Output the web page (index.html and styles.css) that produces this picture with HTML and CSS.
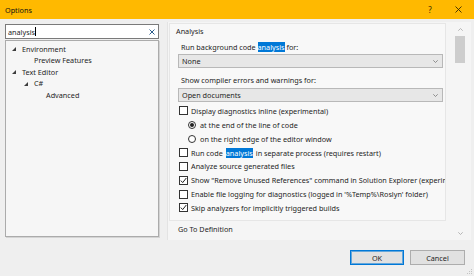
FILE: index.html
```html
<!DOCTYPE html>
<html lang="en">
<head>
  <meta charset="UTF-8">
  <title>Options</title>
  <link rel="stylesheet" href="styles.css">
</head>
<body>

  <div class="dialog">
    <!-- Title bar -->
    <div class="titlebar">
      <span class="title">Options</span>
      <span class="tb-btn tb-help">?</span>
      <span class="tb-btn">
        <svg width="7" height="7" viewBox="0 0 7 7"><path d="M0.5 0.5L6.5 6.5M6.5 0.5L0.5 6.5" stroke="#3a2a00" stroke-width="0.9" fill="none"/></svg>
      </span>
    </div>

    <div class="main">
      <!-- Left: search + tree -->
      <div class="nav">
        <div class="search">
          <span class="search-text">analysis<span class="caret"></span></span>
          <svg class="clear" width="6" height="6" viewBox="0 0 6 6"><path d="M0.5 0.5L5.5 5.5M5.5 0.5L0.5 5.5" stroke="#2b5d8c" stroke-width="1" fill="none"/></svg>
        </div>
        <ul class="tree">
          <li class="lvl0"><span class="exp"><svg width="4" height="4" viewBox="0 0 4 4"><path d="M4 0V4H0Z" fill="#3c3c3c"/></svg></span>Environment</li>
          <li class="lvl1"><span class="exp"></span>Preview Features</li>
          <li class="lvl0"><span class="exp"><svg width="4" height="4" viewBox="0 0 4 4"><path d="M4 0V4H0Z" fill="#3c3c3c"/></svg></span>Text Editor</li>
          <li class="lvl1"><span class="exp"><svg width="4" height="4" viewBox="0 0 4 4"><path d="M4 0V4H0Z" fill="#3c3c3c"/></svg></span>C#</li>
          <li class="lvl2"><span class="exp"></span>Advanced</li>
        </ul>
      </div>

      <!-- Right: option pages -->
      <div class="pane">
        <div class="content">
          <div class="section">
            <div class="section-head">Analysis</div>

            <div class="label">Run background code <mark>analysis</mark> for:</div>
            <div class="combo">
              <span class="combo-text">None</span>
              <svg width="5" height="3" viewBox="0 0 5 3"><path d="M0.3 0.3L2.5 2.5L4.7 0.3" stroke="#777" stroke-width="0.8" fill="none"/></svg>
            </div>

            <div class="label spaced">Show compiler errors and warnings for:</div>
            <div class="combo">
              <span class="combo-text">Open documents</span>
              <svg width="5" height="3" viewBox="0 0 5 3"><path d="M0.3 0.3L2.5 2.5L4.7 0.3" stroke="#777" stroke-width="0.8" fill="none"/></svg>
            </div>

            <div class="checks">
              <div class="row"><span class="box"></span>Display diagnostics inline (experimental)</div>
              <div class="row sub"><span class="radio on"></span>at the end of the line of code</div>
              <div class="row sub"><span class="radio"></span>on the right edge of the editor window</div>
              <div class="row"><span class="box"></span>Run code <mark>analysis</mark> in separate process (requires restart)</div>
              <div class="row"><span class="box"></span>Analyze source generated files</div>
              <div class="row"><span class="box checked"><svg width="7" height="7" viewBox="0 0 7 7"><path d="M0.8 3.6L2.7 5.6L6.3 1" stroke="#222" stroke-width="1" fill="none"/></svg></span>Show "Remove Unused References" command in Solution Explorer (experimental)</div>
              <div class="row"><span class="box"></span>Enable file logging for diagnostics (logged in '%Temp%\Roslyn' folder)</div>
              <div class="row"><span class="box checked"><svg width="7" height="7" viewBox="0 0 7 7"><path d="M0.8 3.6L2.7 5.6L6.3 1" stroke="#222" stroke-width="1" fill="none"/></svg></span>Skip analyzers for implicitly triggered builds</div>
            </div>
          </div>

          <div class="section-head collapsed">Go To Definition</div>
        </div>

        <!-- Scrollbar -->
        <div class="scrollbar">
          <div class="sb-arrow">
            <svg width="5" height="3" viewBox="0 0 5 3"><path d="M0.3 2.7L2.5 0.5L4.7 2.7" stroke="#a6a6a6" stroke-width="0.8" fill="none"/></svg>
          </div>
          <div class="sb-thumb"></div>
          <div class="sb-track"></div>
          <div class="sb-arrow">
            <svg width="5" height="3" viewBox="0 0 5 3"><path d="M0.3 0.3L2.5 2.5L4.7 0.3" stroke="#a6a6a6" stroke-width="0.8" fill="none"/></svg>
          </div>
        </div>
      </div>
    </div>

    <!-- Buttons -->
    <div class="footer">
      <button class="btn primary">OK</button>
      <button class="btn">Cancel</button>
      <svg class="grip" width="6" height="6" viewBox="0 0 6 6"><path d="M5 1h1v1H5zM3 3h1v1H3zM5 3h1v1H5zM1 5h1v1H1zM3 5h1v1H3zM5 5h1v1H5z" fill="#c4c4c4"/></svg>
    </div>
  </div>

</body>
</html>
```

FILE: styles.css
```css
* {
  box-sizing: border-box;
}

body {
  margin: 0;
  width: 474px;
  height: 276px;
  overflow: hidden;
  background: #efefef;
  font-family: 'Noto Sans', 'Liberation Sans', sans-serif;
  font-size: 7.25px;
  color: #1e1e1e;
}

.dialog {
  position: relative;
  height: 276px;
  display: flex;
  flex-direction: column;
}

/* Title bar */
.titlebar {
  height: 19px;
  background: #ffb900;
  display: flex;
  align-items: center;
  padding: 0 2px 0 5px;
  color: #111;
}

.title {
  flex: 1;
}

.tb-btn {
  width: 28px;
  height: 19px;
  display: flex;
  align-items: center;
  justify-content: center;
}

.tb-help {
  font-size: 8px;
  color: #3a2a00;
}

/* Main area */
.main {
  display: flex;
  gap: 8px;
  height: 221px;
  padding: 3px 3px 0 5px;
}

.nav {
  width: 154px;
  display: flex;
  flex-direction: column;
  gap: 1px;
  padding-top: 2px;
}

.search {
  height: 15px;
  background: #fff;
  border: 1px solid #7a7a7a;
  display: flex;
  align-items: center;
  padding: 0 3px 0 2px;
}

.search-text {
  flex: 1;
  display: flex;
  align-items: center;
}

.caret {
  display: inline-block;
  width: 1px;
  height: 9px;
  background: #000;
}

.tree {
  height: 197px;
  margin: 0;
  padding: 2px 0 0;
  list-style: none;
  background: #f6f6f6;
  border: 1px solid #ababab;
  box-shadow: 1px 1px 0 #d4d4d4;
}

.tree li {
  height: 11.5px;
  display: flex;
  align-items: center;
  padding-left: 4px;
}

.tree li.lvl1 {
  padding-left: 16px;
}

.tree li.lvl2 {
  padding-left: 28px;
}

.exp {
  width: 12px;
  display: flex;
  padding-left: 2px;
  padding-top: 1px;
}

/* Right pane */
.pane {
  flex: 1;
  display: flex;
  background: #f5f5f5;
  border-left: 1px solid #e3e3e3;
  padding-right: 4px;
  overflow: hidden;
}

.content {
  flex: 1;
  min-width: 0;
  padding: 1px 7px 0 1px;
}

.section {
  border: 1px solid #e6e6e6;
  background: #f8f8f8;
  padding: 0 2px 5px 6px;
  overflow: hidden;
  white-space: nowrap;
}

.section-head {
  height: 14px;
  line-height: 14px;
}

.section-head.collapsed {
  margin-top: 1px;
  padding-left: 9px;
}

.label {
  height: 12px;
  line-height: 12px;
  margin-top: 3px;
  padding-left: 5px;
}

.label.spaced {
  margin-top: 6px;
}

mark {
  background: #0078d7;
  color: #fff;
}

.combo {
  height: 14px;
  margin: 1px 0 0 2px;
  background: #e7e7e7;
  border: 1px solid #b8b8b8;
  display: flex;
  align-items: center;
  padding: 0 4px 0 3px;
}

.label.spaced + .combo {
  margin-top: 2px;
}

.combo-text {
  flex: 1;
}

.checks {
  margin-top: 2px;
}

.row {
  height: 13.86px;
  display: flex;
  align-items: center;
  gap: 3px;
  padding-left: 3px;
}

.row.sub {
  padding-left: 12px;
  gap: 4px;
}

.box {
  width: 9px;
  height: 9px;
  flex: none;
  background: #fff;
  border: 1px solid #333;
  display: flex;
  align-items: center;
  justify-content: center;
}

.radio {
  width: 8px;
  height: 8px;
  flex: none;
  border-radius: 50%;
  background: #fff;
  border: 1px solid #333;
  display: flex;
  align-items: center;
  justify-content: center;
}

.radio.on::after {
  content: '';
  width: 4px;
  height: 4px;
  border-radius: 50%;
  background: #222;
}

/* Scrollbar */
.scrollbar {
  width: 14px;
  display: flex;
  flex-direction: column;
}

.sb-arrow {
  height: 14px;
  display: flex;
  align-items: center;
  justify-content: center;
}

.sb-thumb {
  width: 10px;
  height: 27px;
  margin: 0 auto;
  background: #cdcdcd;
}

.sb-track {
  flex: 1;
}

/* Footer */
.footer {
  flex: 1;
  display: flex;
  justify-content: flex-end;
  align-items: flex-start;
  gap: 6px;
  padding: 10px 9px 0 0;
}

.btn {
  height: 15px;
  width: 55px;
  padding: 0;
  font: inherit;
  color: #1e1e1e;
  background: #e1e1e1;
  border: 1px solid #adadad;
}

.btn.primary {
  width: 54px;
  border-color: #0078d7;
  box-shadow: inset 0 0 0 1px rgba(0, 120, 215, 0.55);
}

.grip {
  position: absolute;
  right: 2px;
  bottom: 2px;
}
```
